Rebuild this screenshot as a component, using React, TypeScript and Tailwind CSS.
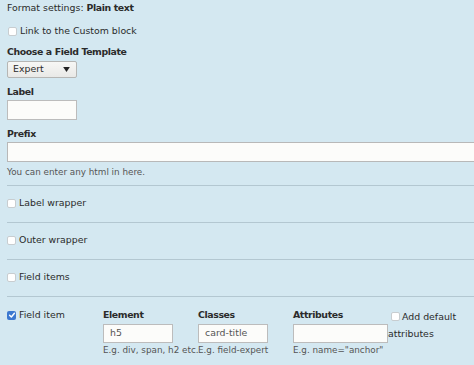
import React from 'react';

// Checkbox
// ---------------
const Check = ({ checked = false }: { checked?: boolean }) =>
  checked ? (
    <span className="inline-flex h-[9px] w-[9px] shrink-0 items-center justify-center rounded-[2px] bg-[#3b78d0]">
      <svg viewBox="0 0 10 10" className="h-[8px] w-[8px]">
        <path
          d="M2 5.2 L4.2 7.4 L8 2.8"
          fill="none"
          stroke="white"
          strokeWidth="1.8"
          strokeLinecap="round"
          strokeLinejoin="round"
        />
      </svg>
    </span>
  ) : (
    <span className="inline-block h-[9px] w-[9px] shrink-0 rounded-[2px] border border-[#c8cdd0] bg-white" />
  );

// Wrapper section
// ---------------
const Section = ({ label }: { label: string }) => (
  <div className="flex items-center gap-[3px] border-b border-[#b3c7d1] pb-[13px] pt-[11px] leading-[12px]">
    <Check />
    <span>{label}</span>
  </div>
);

// Column for field item
// ---------------
const Column = ({
  label,
  value,
  help,
  width,
}: {
  label: string;
  value: string;
  help: string;
  width: string;
}) => (
  <div className="flex w-[95px] shrink-0 flex-col">
    <div className="font-bold leading-[12px] tracking-[-0.4px]">{label}</div>
    <div
      className={`mt-[3px] flex h-[19px] items-center border border-[#bcbcbc] bg-[#fcfcfa] px-[6px] text-[#555] ${width}`}
    >
      {value}
    </div>
    <div className="mt-[2px] whitespace-nowrap text-[8.8px] leading-[10px] text-[#555]">
      {help}
    </div>
  </div>
);

export default function App() {
  return (
    <div className="h-[365px] w-[474px] overflow-hidden bg-[#d4e8f1] font-['DejaVu_Sans',sans-serif] text-[9.4px] text-[#2b2b2b]">
      <div className="pl-[7px] pt-[2px]">
        <div className="leading-[12px]">
          Format settings:{' '}
          <span className="font-bold tracking-[-0.4px]">Plain text</span>
        </div>
        <div className="mt-[11px] flex items-center gap-[3px] pl-[1px] leading-[12px]">
          <Check />
          <span>Link to the Custom block</span>
        </div>
        <div className="mt-[9px] font-bold leading-[12px] tracking-[-0.4px]">
          Choose a Field Template
        </div>
        <div className="mt-[3px] flex h-[17px] w-[70px] items-center justify-between rounded-[2px] border border-[#b6b6b4] bg-gradient-to-b from-[#f7f7f5] to-[#e9e9e7] pl-[5px] pr-[6px]">
          <span>Expert</span>
          <svg viewBox="0 0 8 6" className="h-[5px] w-[7px]">
            <path d="M0 0 H8 L4 6 Z" fill="#222" />
          </svg>
        </div>
        <div className="mt-[8px] font-bold leading-[12px] tracking-[-0.4px]">
          Label
        </div>
        <div className="mt-[2px] h-[20px] w-[70px] border border-[#bcbcbc] bg-[#fcfcfa]" />
        <div className="mt-[8px] font-bold leading-[12px] tracking-[-0.4px]">
          Prefix
        </div>
        <div className="mt-[2px] h-[20px] w-[480px] border border-[#b8b8b8] bg-[#fcfcfa]" />
        <div className="mt-[4px] text-[8.8px] leading-[12px] text-[#555]">
          You can enter any html in here.
        </div>
      </div>
      <div className="ml-[7px] mt-[7px] border-b border-[#b3c7d1]" />
      <div className="pl-[7px]">
        <Section label="Label wrapper" />
        <Section label="Outer wrapper" />
        <Section label="Field items" />
        <div className="flex pt-[12px]">
          <div className="flex w-[96px] shrink-0 items-start gap-[3px] leading-[12px]">
            <span className="mt-[1px]">
              <Check checked />
            </span>
            <span>Field item</span>
          </div>
          <Column label="Element" value="h5" help="E.g. div, span, h2 etc." width="w-[70px]" />
          <Column label="Classes" value="card-title" help="E.g. field-expert" width="w-[70px]" />
          <Column label="Attributes" value="" help={'E.g. name="anchor"'} width="w-[95px]" />
          <div className="w-[76px] shrink-0 leading-[16px]">
            <span className="ml-[3px] mr-[2px] inline-block align-[-1px]">
              <Check />
            </span>
            Add default attributes
          </div>
        </div>
      </div>
    </div>
  );
}
